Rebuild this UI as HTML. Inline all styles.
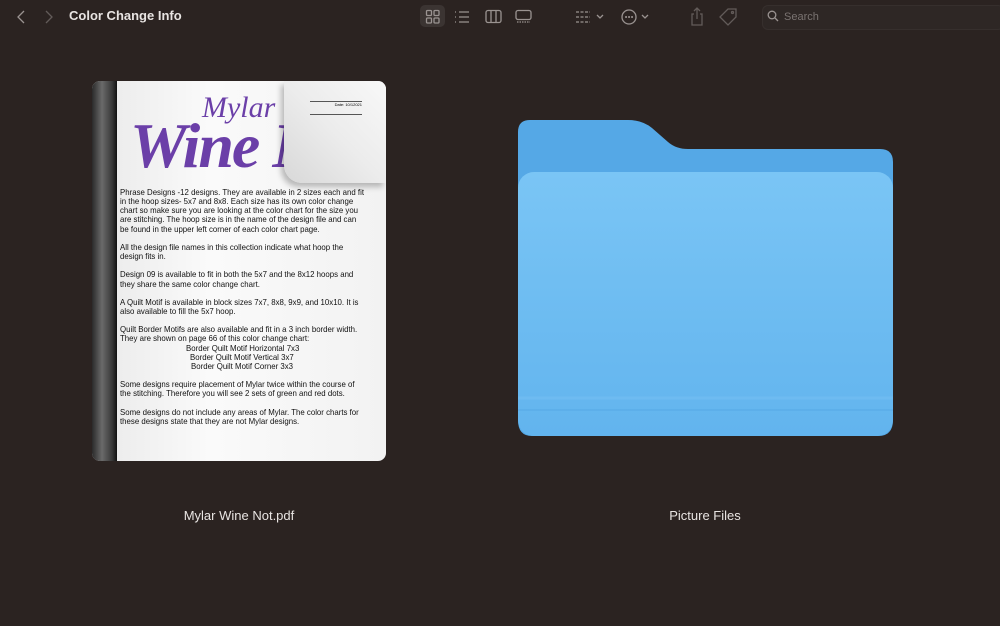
<!DOCTYPE html>
<html><head><style>
body{margin:0;width:1000px;height:626px;background:#2b2321;font-family:"Liberation Sans",sans-serif;overflow:hidden;position:relative}
.t{position:absolute;color:#e8e4e2}
.ic{position:absolute;stroke:#9a9391;fill:none;stroke-width:1.3}
.doc{position:absolute;left:92px;top:81px;width:294px;height:380px;border-radius:8px;background:linear-gradient(90deg,#e9e9e9,#fafafa 40%,#f2f2f2);overflow:hidden}
.spine{position:absolute;left:0;top:0;width:25px;height:380px;background:linear-gradient(90deg,#2a2a2a,#6a6a6a 40%,#3a3a3a 80%,#111);border-radius:6px 0 0 6px}
.body{position:absolute;left:28px;top:107px;width:246px;font-size:7.85px;line-height:9.15px;color:#111}
.body p{margin:0 0 9.15px}
</style></head><body>
<svg class="ic" style="left:14px;top:9px" width="14" height="16"><path d="M10 2L4 8l6 6"/></svg>
<svg class="ic" style="left:42px;top:9px;opacity:.5" width="14" height="16"><path d="M4 2l6 6-6 6"/></svg>
<div class="t" style="left:69px;top:8px;font-size:13px;font-weight:bold">Color Change Info</div>
<div style="position:absolute;left:420px;top:5px;width:25px;height:22px;border-radius:5px;background:#3b3432"></div>
<svg class="ic" style="left:425px;top:9px" width="16" height="16"><rect x="1.5" y="1.5" width="5" height="5" rx="1"/><rect x="9" y="1.5" width="5" height="5" rx="1"/><rect x="1.5" y="9" width="5" height="5" rx="1"/><rect x="9" y="9" width="5" height="5" rx="1"/></svg>
<svg class="ic" style="left:454px;top:9px" width="16" height="16"><path d="M5 3h10M5 8h10M5 13h10M1 3h1M1 8h1M1 13h1"/></svg>
<svg class="ic" style="left:485px;top:9px" width="17" height="16"><rect x="1" y="1.5" width="15" height="12" rx="2"/><path d="M6 1.5v12M11 1.5v12"/></svg>
<svg class="ic" style="left:515px;top:9px" width="17" height="16"><rect x="1" y="1.5" width="15" height="9" rx="2"/><path d="M2 13h13" stroke-dasharray="1.5 1"/></svg>
<svg class="ic" style="left:575px;top:9px" width="30" height="16"><path d="M1 3h14M1 8h14M1 13h14" stroke-dasharray="3 1.5"/><path d="M22 6l3 3 3-3"/></svg>
<svg class="ic" style="left:621px;top:8px" width="30" height="18"><circle cx="8" cy="9" r="7"/><path d="M5 9h.1M8 9h.1M11 9h.1" stroke-width="2" stroke-linecap="round"/><path d="M21 7l3 3 3-3"/></svg>
<svg class="ic" style="left:689px;top:7px;opacity:.5" width="16" height="20"><path d="M5 7H3v11h10V7h-2M8 1v11M5 4l3-3 3 3"/></svg>
<svg class="ic" style="left:719px;top:7px;opacity:.5" width="20" height="20"><path d="M9 2h8v8l-8 8-8-8z"/><circle cx="13.5" cy="5.5" r="1"/></svg>
<div style="position:absolute;left:762px;top:5px;width:240px;height:23px;border-radius:6px;background:#2e2725;border:1px solid #362f2d"></div>
<svg class="ic" style="left:767px;top:10px" width="12" height="12"><circle cx="5" cy="5" r="3.8"/><path d="M8 8l3 3"/></svg>
<div class="t" style="left:784px;top:11px;font-size:11px;color:#7a7371">Search</div>

<div class="doc">
<div class="spine"></div>
<div style="position:absolute;left:110px;top:10px;font-family:'Liberation Serif',serif;font-style:italic;color:#6b3fa8;font-size:30px">Mylar</div>
<div style="position:absolute;left:38px;top:28px;font-family:'Liberation Serif',serif;font-style:italic;font-weight:bold;color:#6b3fa8;font-size:64px;letter-spacing:-2px">Wine N</div>
<div style="position:absolute;left:192px;top:0;width:102px;height:102px;background:linear-gradient(225deg,#f8f8f8,#ececec 50%,#d8d8d8);border-radius:0 0 0 18px;box-shadow:-3px 4px 6px rgba(0,0,0,.25)"></div>
<div style="position:absolute;left:218px;top:20px;width:52px;border-top:1px solid #555;font-size:4px;text-align:right">Date: 10/12021</div>
<div style="position:absolute;left:218px;top:33px;width:52px;border-top:1px solid #555"></div>
<div class="body">
<p>Phrase Designs -12 designs. They are available in 2 sizes each and fit in the hoop sizes- 5x7 and 8x8. Each size has its own color change chart so make sure you are looking at the color chart for the size you are stitching. The hoop size is in the name of the design file and can be found in the upper left corner of each color chart page.</p>
<p>All the design file names in this collection indicate what hoop the design fits in.</p>
<p>Design 09 is available to fit in both the 5x7 and the 8x12 hoops and they share the same color change chart.</p>
<p>A Quilt Motif is available in block sizes 7x7, 8x8, 9x9, and 10x10. It is also available to fill the 5x7 hoop.</p>
<p>Quilt Border Motifs are also available and fit in a 3 inch border width. They are shown on page 66 of this color change chart:<br><span style="padding-left:66px">Border Quilt Motif Horizontal 7x3</span><br><span style="padding-left:70px">Border Quilt Motif Vertical 3x7</span><br><span style="padding-left:71px">Border Quilt Motif Corner 3x3</span></p>
<p>Some designs require placement of Mylar twice within the course of the stitching.  Therefore you will see 2 sets of green and red dots.</p>
<p>Some designs do not include any areas of Mylar. The color charts for these designs state that they are not Mylar designs.</p>
</div>
</div>

<svg style="position:absolute;left:518px;top:120px" width="376" height="318">
<defs><linearGradient id="f" x1="0" y1="0" x2="0" y2="1"><stop offset="0" stop-color="#7ac5f5"/><stop offset="1" stop-color="#62b4ee"/></linearGradient></defs>
<path d="M12 0H110Q124 0 134 8L150 22Q158 29 170 29H362Q375 29 375 42V300Q375 316 360 316H14Q0 316 0 300V12Q0 0 12 0Z" fill="#55a8e6"/>
<rect x="0" y="52" width="375" height="264" rx="16" fill="url(#f)"/>
<path d="M0 278H375" stroke="#6ebbf1" stroke-width="3"/>
<path d="M0 290H375" stroke="#55a8e6" stroke-width="1.5" opacity=".6"/>
</svg>

<div class="t" style="left:0;width:478px;text-align:center;top:508px;font-size:13px">Mylar Wine Not.pdf</div>
<div class="t" style="left:605px;width:200px;text-align:center;top:508px;font-size:13px">Picture Files</div>
</body></html>
